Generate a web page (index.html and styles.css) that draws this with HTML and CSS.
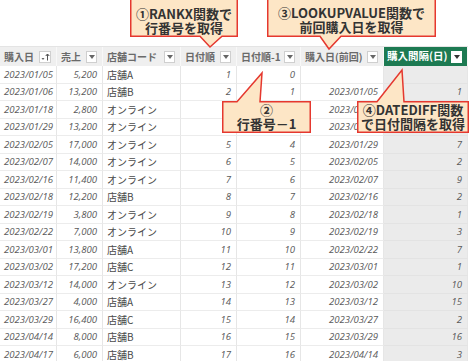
FILE: index.html
```html
<!DOCTYPE html>
<html lang="ja">
<head>
<meta charset="utf-8">
<link rel="stylesheet" href="styles.css">
</head>
<body>
<div class="page">
  <div class="grid">
    <div class="row head">
      <div class="hc"><span>購入日</span><span class="btn sort"><svg width="9" height="8" viewBox="0 0 9 8"><path d="M0.5 5h3l-1.5 2z" fill="#555"/><path d="M6.5 7.5V1M4.8 2.8L6.5 1l1.7 1.8" stroke="#555" stroke-width="1" fill="none"/></svg></span></div>
      <div class="hc"><span>売上</span><span class="btn"><svg width="6" height="4" viewBox="0 0 6 4"><path d="M0 0H6L3 4Z"/></svg></span></div>
      <div class="hc"><span>店舗コード</span><span class="btn"><svg width="6" height="4" viewBox="0 0 6 4"><path d="M0 0H6L3 4Z"/></svg></span></div>
      <div class="hc"><span>日付順</span><span class="btn"><svg width="6" height="4" viewBox="0 0 6 4"><path d="M0 0H6L3 4Z"/></svg></span></div>
      <div class="hc"><span>日付順-1</span><span class="btn"><svg width="6" height="4" viewBox="0 0 6 4"><path d="M0 0H6L3 4Z"/></svg></span></div>
      <div class="hc"><span>購入日(前回)</span><span class="btn"><svg width="6" height="4" viewBox="0 0 6 4"><path d="M0 0H6L3 4Z"/></svg></span></div>
      <div class="hc sel-head"><span>購入間隔(日)</span><span class="btn"><svg width="6" height="4" viewBox="0 0 6 4"><path d="M0 0H6L3 4Z"/></svg></span></div>
    </div>
    <div class="row"><div class="c d">2023/01/05</div><div class="c n">5,200</div><div class="c t">店舗A</div><div class="c n">1</div><div class="c n">0</div><div class="c n"></div><div class="c n sel"></div></div>
    <div class="row"><div class="c d">2023/01/06</div><div class="c n">13,200</div><div class="c t">店舗B</div><div class="c n">2</div><div class="c n">1</div><div class="c n">2023/01/05</div><div class="c n sel">1</div></div>
    <div class="row"><div class="c d">2023/01/18</div><div class="c n">2,800</div><div class="c t">オンライン</div><div class="c n">3</div><div class="c n">2</div><div class="c n">2023/01/06</div><div class="c n sel">12</div></div>
    <div class="row"><div class="c d">2023/01/29</div><div class="c n">13,200</div><div class="c t">オンライン</div><div class="c n">4</div><div class="c n">3</div><div class="c n">2023/01/18</div><div class="c n sel">11</div></div>
    <div class="row"><div class="c d">2023/02/05</div><div class="c n">17,000</div><div class="c t">オンライン</div><div class="c n">5</div><div class="c n">4</div><div class="c n">2023/01/29</div><div class="c n sel">7</div></div>
    <div class="row"><div class="c d">2023/02/07</div><div class="c n">14,000</div><div class="c t">オンライン</div><div class="c n">6</div><div class="c n">5</div><div class="c n">2023/02/05</div><div class="c n sel">2</div></div>
    <div class="row"><div class="c d">2023/02/16</div><div class="c n">11,400</div><div class="c t">オンライン</div><div class="c n">7</div><div class="c n">6</div><div class="c n">2023/02/07</div><div class="c n sel">9</div></div>
    <div class="row"><div class="c d">2023/02/18</div><div class="c n">12,200</div><div class="c t">店舗B</div><div class="c n">8</div><div class="c n">7</div><div class="c n">2023/02/16</div><div class="c n sel">2</div></div>
    <div class="row"><div class="c d">2023/02/19</div><div class="c n">3,800</div><div class="c t">オンライン</div><div class="c n">9</div><div class="c n">8</div><div class="c n">2023/02/18</div><div class="c n sel">1</div></div>
    <div class="row"><div class="c d">2023/02/22</div><div class="c n">7,000</div><div class="c t">オンライン</div><div class="c n">10</div><div class="c n">9</div><div class="c n">2023/02/19</div><div class="c n sel">3</div></div>
    <div class="row"><div class="c d">2023/03/01</div><div class="c n">13,800</div><div class="c t">店舗A</div><div class="c n">11</div><div class="c n">10</div><div class="c n">2023/02/22</div><div class="c n sel">7</div></div>
    <div class="row"><div class="c d">2023/03/02</div><div class="c n">17,200</div><div class="c t">店舗C</div><div class="c n">12</div><div class="c n">11</div><div class="c n">2023/03/01</div><div class="c n sel">1</div></div>
    <div class="row"><div class="c d">2023/03/12</div><div class="c n">14,000</div><div class="c t">オンライン</div><div class="c n">13</div><div class="c n">12</div><div class="c n">2023/03/02</div><div class="c n sel">10</div></div>
    <div class="row"><div class="c d">2023/03/27</div><div class="c n">4,000</div><div class="c t">店舗A</div><div class="c n">14</div><div class="c n">13</div><div class="c n">2023/03/12</div><div class="c n sel">15</div></div>
    <div class="row"><div class="c d">2023/03/29</div><div class="c n">16,400</div><div class="c t">店舗C</div><div class="c n">15</div><div class="c n">14</div><div class="c n">2023/03/27</div><div class="c n sel">2</div></div>
    <div class="row"><div class="c d">2023/04/14</div><div class="c n">8,000</div><div class="c t">店舗B</div><div class="c n">16</div><div class="c n">15</div><div class="c n">2023/03/29</div><div class="c n sel">16</div></div>
    <div class="row"><div class="c d">2023/04/17</div><div class="c n">6,000</div><div class="c t">店舗B</div><div class="c n">17</div><div class="c n">16</div><div class="c n">2023/04/14</div><div class="c n sel">3</div></div>
  </div>

  <div class="callout co1">
    <svg class="shape" width="108" height="45"><path d="M0.75 0.75H107.25V44.25H92L80 55L70 44.25H0.75Z"/></svg>
    ①RANKX関数で<br>行番号を取得
  </div>
  <div class="callout co3">
    <svg class="shape" width="169" height="45"><path d="M0.75 0.75H168.25V44.25H74L62 57L53 44.25H0.75Z"/></svg>
    ③LOOKUPVALUE関数で<br>前回購入日を取得
  </div>
  <div class="callout co2">
    <svg class="shape" width="89" height="32"><path d="M0.75 0.75H15L40 -28L38 0.75H88.25V31.25H0.75Z"/></svg>
    ②<br>行番号－1
  </div>
  <div class="callout co4">
    <svg class="shape" width="112" height="32"><path d="M0.75 0.75H20L45 -31L47 0.75H111.25V31.25H0.75Z"/></svg>
    ④DATEDIFF関数<br>で日付間隔を取得
  </div>
</div>
</body>
</html>
```

FILE: styles.css
```css
html, body {
  margin: 0;
  padding: 0;
  background: #ffffff;
}

.page {
  position: relative;
  width: 474px;
  height: 361px;
  overflow: hidden;
  padding-top: 46px;
  box-sizing: border-box;
}

.grid {
  width: 468px;
}

.row {
  display: grid;
  grid-template-columns: 57px 46px 78px 56px 64px 83px 84px;
  height: 17.5px;
}

.row.head {
  height: 20px;
  background: #efefef;
  border-top: 1px solid #e4e4e4;
  box-sizing: border-box;
}

.hc {
  display: flex;
  align-items: center;
  justify-content: space-between;
  padding: 0 5px 0 4px;
  font: 700 10px/1 "Noto Sans CJK JP", sans-serif;
  color: #6a6a6a;
  border-right: 1px solid #f8f8f8;
  overflow: hidden;
  white-space: nowrap;
}

.btn {
  display: flex;
  align-items: center;
  justify-content: center;
  width: 9px;
  height: 10px;
  background: #ffffff;
  border: 1px solid #cfcfcf;
  flex: none;
}

.btn svg path {
  fill: #666666;
}

.btn.sort {
  width: 10px;
}

.sel-head {
  background: #1d7a52;
  color: #ffffff;
  font-size: 10.5px;
  padding-left: 3px;
}

.sel-head .btn {
  border-color: #ffffff;
}

.sel-head .btn svg path {
  fill: #333333;
}

.c {
  display: flex;
  align-items: center;
  padding: 0 5px;
  border-right: 1px solid #e6e6e6;
  border-bottom: 1px solid #ececec;
  box-sizing: border-box;
  white-space: nowrap;
  overflow: hidden;
  font-size: 9.6px;
  color: #5a5a5a;
}

.c.d {
  font-family: "Open Sans", "Noto Sans CJK JP", sans-serif;
  font-style: italic;
  padding-left: 4px;
}

.c.n {
  justify-content: flex-end;
  font-family: "Open Sans", "Noto Sans CJK JP", sans-serif;
  font-style: italic;
}

.c.t {
  font-family: "Noto Sans CJK JP", sans-serif;
  font-size: 10px;
  color: #4a4a4a;
  padding-left: 4px;
}

.c.sel {
  background: #ebebeb;
  border-bottom-color: #e3e3e3;
}

.callout {
  position: absolute;
  z-index: 2;
  text-align: center;
  font: 700 13px/14px "Noto Sans CJK JP", sans-serif;
  color: #333333;
  box-sizing: border-box;
  white-space: nowrap;
}

.callout .shape {
  position: absolute;
  left: 0;
  top: 0;
  overflow: visible;
  z-index: -1;
}

.callout .shape path {
  fill: #fde6c6;
  stroke: #e5382f;
  stroke-width: 1.5;
  stroke-linejoin: miter;
}

.co1 {
  left: 130px;
  top: -8px;
  width: 108px;
  height: 45px;
  padding-top: 15px;
}

.co3 {
  left: 267px;
  top: -8px;
  width: 169px;
  height: 45px;
  padding-top: 14px;
}

.co2 {
  left: 222px;
  top: 101px;
  width: 89px;
  height: 32px;
  padding-top: 2px;
}

.co4 {
  left: 357px;
  top: 101px;
  width: 112px;
  height: 32px;
  padding-top: 2px;
}
```
